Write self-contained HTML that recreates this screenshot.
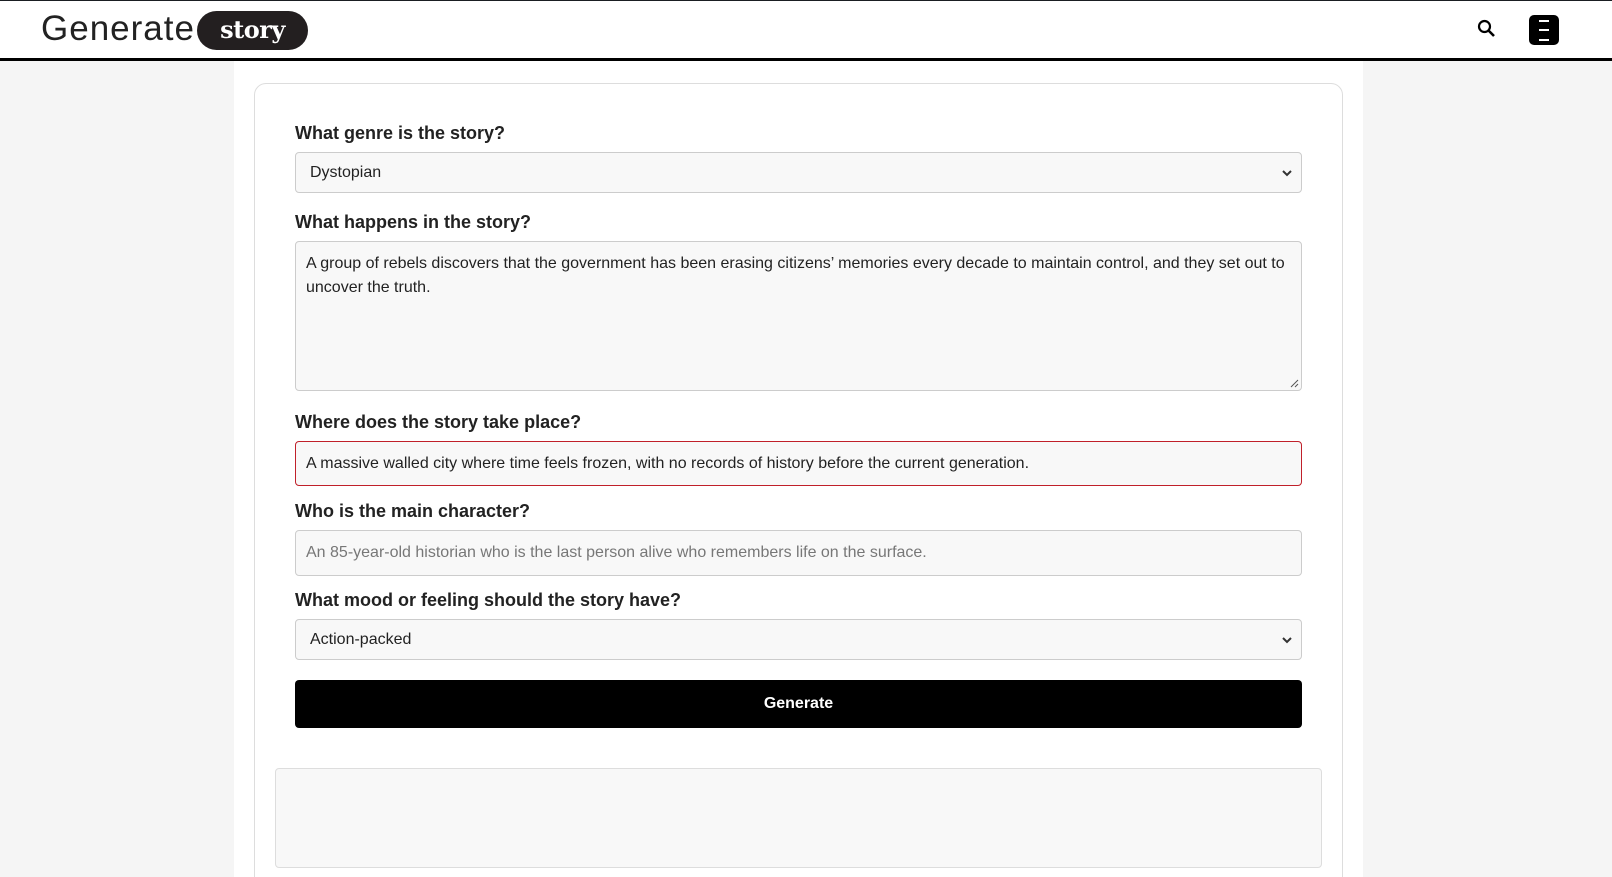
<!DOCTYPE html>
<html><head><meta charset="utf-8"><style>
*{box-sizing:border-box;margin:0;padding:0}
html,body{width:1612px;height:877px;overflow:hidden;background:#f5f5f5;font-family:"Liberation Sans",Arial,sans-serif;color:#222}
.wrap{position:relative;width:1612px;height:877px;overflow:hidden}
.hdr{position:absolute;left:0;top:0;width:1612px;height:61px;background:#fff;border-top:1px solid #1a1e22;border-bottom:3px solid #000;z-index:2}
.logo{position:absolute;left:41px;top:8px;font-family:"Liberation Sans",sans-serif;font-size:35px;font-weight:normal;letter-spacing:1px;color:#222}
.pill{position:absolute;left:197px;top:10px;width:111px;height:39px;border-radius:20px;background:#231f20;color:#fff;font-family:"DejaVu Serif","Liberation Serif",serif;font-weight:bold;font-size:24px;text-align:center;line-height:37px;letter-spacing:-0.5px}
.col{position:absolute;left:234px;top:61px;width:1129px;height:816px;background:#fff}
.card{position:absolute;left:254px;top:83px;width:1089px;height:820px;border:1px solid #ddd;border-radius:12px;background:#fff}
.lbl{position:absolute;left:295px;font-size:18px;font-weight:bold;color:#222}
.fld{position:absolute;left:295px;width:1007px;background:#f8f8f8;border:1px solid #ccc;border-radius:4px;font-size:16px;color:#222;padding-left:10px}
.sel{padding-left:14px}
.chev{position:absolute;right:8px;top:50%;margin-top:-5px}
.btn{position:absolute;left:295px;top:680px;width:1007px;height:48px;background:#000;border-radius:4px;color:#fff;font-weight:bold;font-size:16px;text-align:center;line-height:48px}
.out{position:absolute;left:275px;top:768px;width:1047px;height:100px;background:#f8f8f8;border:1px solid #ddd;border-radius:4px}
</style></head><body><div class="wrap">
<div class="hdr">
<div class="logo">Generate</div>
<div class="pill">story</div>
<svg style="position:absolute;left:1477px;top:18px" width="20" height="20" viewBox="0 0 20 20"><circle cx="7.5" cy="7.5" r="5.5" fill="none" stroke="#000" stroke-width="2.2"/><path d="M11.5 11.5L17 17" stroke="#000" stroke-width="2.6"/></svg>
<div style="position:absolute;left:1529px;top:14px;width:30px;height:30px;background:#000;border-radius:5px">
<div style="position:absolute;left:10px;top:5px;width:10px;height:2px;background:#fff"></div>
<div style="position:absolute;left:10px;top:14px;width:10px;height:2px;background:#fff"></div>
<div style="position:absolute;left:10px;top:24px;width:10px;height:2px;background:#fff"></div>
</div>
</div>
<div class="col"></div>
<div class="card"></div>

<div class="lbl" style="top:123px">What genre is the story?</div>
<div class="fld sel" style="top:152px;height:41px;line-height:39px">Dystopian<svg class="chev" width="12" height="10" viewBox="0 0 12 10"><path d="M2 3l4 4 4-4" fill="none" stroke="#333" stroke-width="2"/></svg></div>

<div class="lbl" style="top:212px">What happens in the story?</div>
<div class="fld" style="top:241px;height:150px;padding-top:10px;line-height:24px;padding-right:12px">A group of rebels discovers that the government has been erasing citizens’ memories every decade to maintain control, and they set out to uncover the truth.
<svg style="position:absolute;right:2px;bottom:2px" width="9" height="9"><path d="M8 1L1 8M8 5L5 8" stroke="#555" stroke-width="1"/></svg></div>

<div class="lbl" style="top:412px">Where does the story take place?</div>
<div class="fld" style="top:441px;height:45px;line-height:43px;border-color:#c0202a">A massive walled city where time feels frozen, with no records of history before the current generation.</div>

<div class="lbl" style="top:501px">Who is the main character?</div>
<div class="fld" style="top:530px;height:46px;line-height:44px;color:#777">An 85-year-old historian who is the last person alive who remembers life on the surface.</div>

<div class="lbl" style="top:590px">What mood or feeling should the story have?</div>
<div class="fld sel" style="top:619px;height:41px;line-height:39px">Action-packed<svg class="chev" width="12" height="10" viewBox="0 0 12 10"><path d="M2 3l4 4 4-4" fill="none" stroke="#333" stroke-width="2"/></svg></div>

<div class="btn">Generate</div>
<div class="out"></div>
</div></body></html>
